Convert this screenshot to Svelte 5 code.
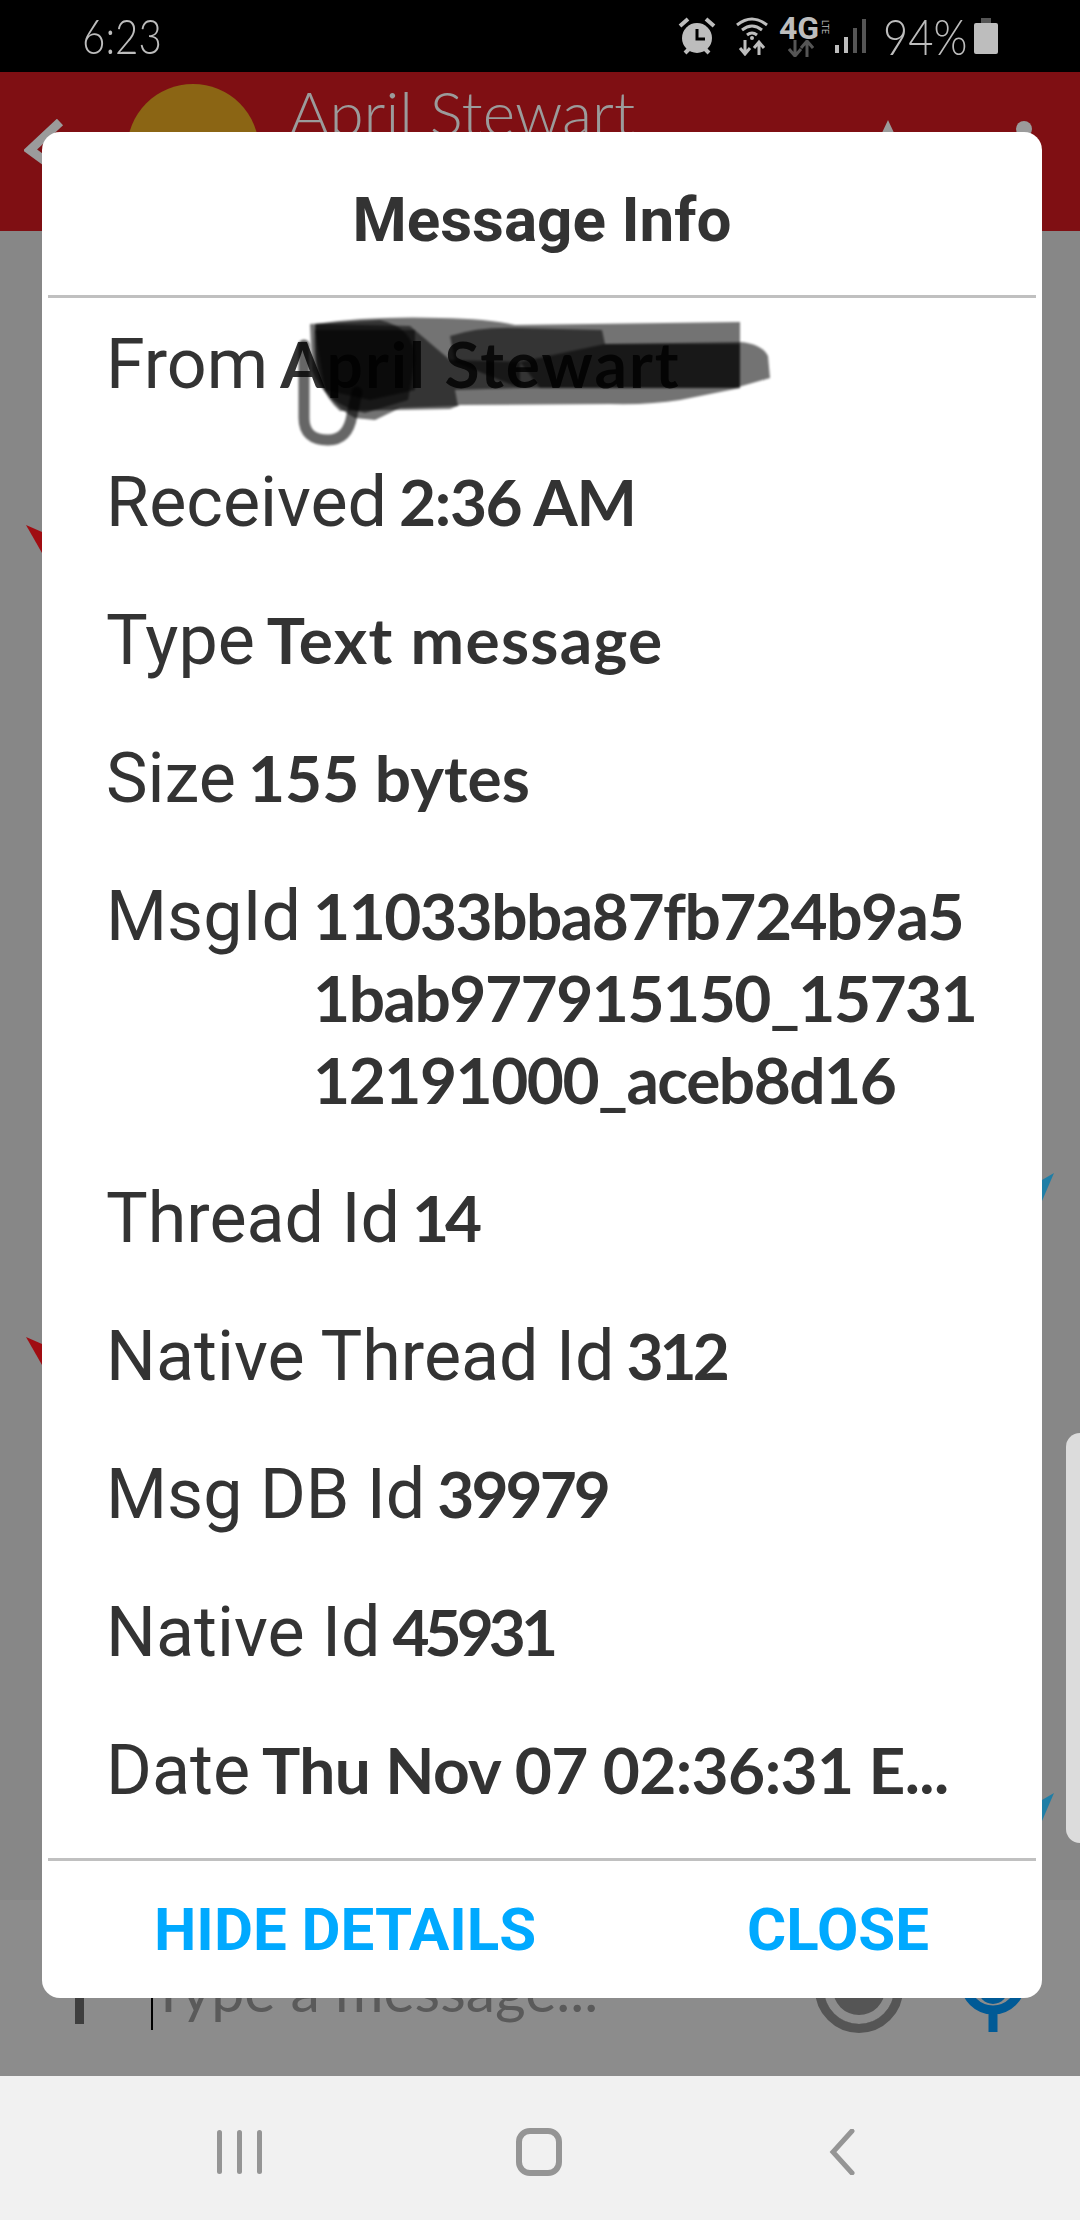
<script>
  // rows of the info dialog, long values are split the way the phone wrapped them
  // ls = letter spacing so the stand-in font runs as wide as the original handwriting
  const rows = [
    { label: 'From', lines: ['April Stewart'], ls: 2 },
    { label: 'Received', lines: ['2:36 AM'], ls: -1.4 },
    { label: 'Type', lines: ['Text message'], ls: 1.3 },
    { label: 'Size', lines: ['155 bytes'], ls: 0 },
    { label: 'MsgId', lines: ['11033bba87fb724b9a5', '1bab977915150_15731', '12191000_aceb8d16'], ls: -1.5 },
    { label: 'Thread Id', lines: ['14'], ls: -4 },
    { label: 'Native Thread Id', lines: ['312'], ls: -4 },
    { label: 'Msg DB Id', lines: ['39979'], ls: -3 },
    { label: 'Native Id', lines: ['45931'], ls: -5 },
    { label: 'Date', lines: ['Thu Nov 07 02:36:31 E...'], ls: -0.6 }
  ];
</script>

<div class="phone">
  <div class="status">
    <span class="time">6:23</span>
    <div class="status-icons">
      <svg class="alarm" width="38" height="38" viewBox="0 0 38 38">
        <circle cx="19" cy="21" r="15" fill="#bdbdbd" />
        <path d="M19 12v10h8" fill="none" stroke="#000" stroke-width="3" />
        <path d="M2 9l8-7M36 9l-8-7M7 36l4-4M31 36l-4-4" stroke="#bdbdbd" stroke-width="4" />
      </svg>
      <svg class="wifi" width="32" height="40" viewBox="0 0 32 40">
        <path d="M1 9Q16-3 31 9M6 14Q16 6 26 14M11 19Q16 15 21 19" fill="none" stroke="#bdbdbd" stroke-width="3" />
        <circle cx="16" cy="22" r="2" fill="#bdbdbd" />
        <path d="M9 24v13M4 32l5 6 5-6M23 39V26M18 32l5-6 5 6" fill="none" stroke="#bdbdbd" stroke-width="3" />
      </svg>
      <div class="net">
        <div class="net-top"><span class="g4">4G</span><span class="lte">LTE</span></div>
        <svg width="26" height="17" viewBox="0 0 26 17">
          <path d="M7 0v15M1 9l6 7 6-7M19 17V2M13 8l6-7 6 7" fill="none" stroke="#555" stroke-width="3" />
        </svg>
      </div>
      <svg class="signal" width="31" height="34" viewBox="0 0 31 34">
        <rect x="0" y="26" width="4" height="8" fill="#bdbdbd" />
        <rect x="9" y="18" width="4" height="16" fill="#bdbdbd" />
        <rect x="18" y="9" width="4" height="25" fill="#555" />
        <rect x="27" y="0" width="4" height="34" fill="#555" />
      </svg>
      <span class="pct">94%</span>
      <svg class="battery" width="24" height="36" viewBox="0 0 24 36">
        <rect x="7" y="0" width="10" height="5" fill="#555" />
        <rect x="0" y="5" width="24" height="31" rx="2" fill="#bdbdbd" />
      </svg>
    </div>
  </div>

  <header class="topbar">
    <svg class="back" width="40" height="54" viewBox="0 0 40 54">
      <path d="M36 3L6 31l30 22" fill="none" stroke="#9b9b9b" stroke-width="9" />
    </svg>
    <div class="avatar"></div>
    <span class="contact">April Stewart</span>
    <svg class="top-action" width="28" height="40" viewBox="0 0 28 40">
      <path d="M14 0L28 30H0z" fill="#9b9b9b" />
    </svg>
    <span class="kebab"></span>
  </header>

  <main class="messages">
    <i class="tail red one"></i>
    <i class="tail red two"></i>
    <i class="tail blue one"></i>
    <i class="tail blue two"></i>
    <div class="scrollbar"></div>
  </main>

  <footer class="composer">
    <span class="plus"></span>
    <span class="caret"></span>
    <span class="placeholder">Type a message...</span>
    <span class="target"></span>
    <svg class="mic" width="64" height="76" viewBox="0 0 64 76">
      <rect x="17" y="0" width="30" height="48" rx="15" fill="#005a96" />
      <path d="M4 26a28 28 0 0 0 56 0M32 54v22" fill="none" stroke="#005a96" stroke-width="9" />
    </svg>
  </footer>

  <nav class="navbar">
    <div class="recents"><i></i><i></i><i></i></div>
    <div class="home"></div>
    <svg width="26" height="46" viewBox="0 0 26 46">
      <path d="M23 2L4 23l19 21" fill="none" stroke="#959595" stroke-width="5" stroke-linecap="round" />
    </svg>
  </nav>

  <div class="dialog">
    <h2>Message Info</h2>
    <div class="rows">
      {#each rows as row}
        <div class="row">
          <span class="label">{row.label}</span>
          <div class="value" style="letter-spacing: {row.ls}px">
            {#each row.lines as line}
              <div>{line}</div>
            {/each}
          </div>
        </div>
      {/each}
    </div>
    <div class="actions">
      <span>HIDE DETAILS</span>
      <span>CLOSE</span>
    </div>

    <!-- marker scribble over the sender's name -->
    <svg class="scribble" width="500" height="160" viewBox="0 0 500 160">
      <g fill="#000" fill-opacity="0.55">
        <path d="M35 24Q90 16 160 18Q210 19 235 25L460 22V88L400 100Q370 105 330 104L180 105L170 109L60 111Q30 85 35 24Z" />
        <path d="M30 24L100 20Q135 28 135 60L128 100L85 113Q45 105 32 70Z" />
        <path d="M170 36Q200 26 240 28L322 30L325 44L460 42Q482 44 488 56L490 78L455 88L240 88L175 62Z" />
        <path d="M36 24L130 26L170 60L240 62L240 88L175 90L178 106L120 108L95 120L75 118Q40 100 36 60Z" />
        <path d="M325 44H460V88H260L240 62Z" />
        <path d="M35 30L135 30L135 90L90 100L45 90Z" />
      </g>
      <path d="M24 45V118Q24 140 48 140Q68 140 72 115L77 92" fill="none" stroke="#000" stroke-opacity="0.6" stroke-width="11" stroke-linecap="round" />
    </svg>
  </div>
</div>

<style>
  :global(body) {
    margin: 0;
    background: #8a8a8a;
  }

  .phone {
    position: relative;
    width: 1080px;
    height: 2220px;
    display: flex;
    flex-direction: column;
    overflow: hidden;
    font-family: Roboto, "Liberation Sans", sans-serif;
  }

  .status {
    height: 72px;
    background: #000;
    display: flex;
    align-items: center;
    justify-content: space-between;
    padding: 0 82px 0 82px;
    color: #bdbdbd;
    flex: none;
  }
  .time,
  .pct {
    font-family: Lato, sans-serif;
    font-weight: 300;
    line-height: 1;
    display: inline-block;
  }
  .time {
    font-size: 48px;
    transform: scaleX(0.84);
    transform-origin: left center;
  }
  .status-icons {
    display: flex;
    align-items: center;
  }
  .wifi { margin-left: 20px; }
  .net {
    margin-left: 10px;
    width: 46px;
    display: flex;
    flex-direction: column;
    align-items: center;
  }
  .net-top {
    display: flex;
    align-items: center;
    height: 24px;
    width: 46px;
    color: #bdbdbd;
  }
  .g4 {
    font-weight: 700;
    font-size: 32px;
    line-height: 24px;
    margin-left: 1px;
  }
  .lte {
    font-size: 9px;
    writing-mode: vertical-rl;
    line-height: 9px;
    margin-left: 1px;
  }
  .signal { margin-left: 11px; }
  .pct {
    margin-left: 17px;
    width: 79px;
    font-size: 50px;
    white-space: nowrap;
    transform: scaleX(0.87);
    transform-origin: left center;
  }
  .battery { margin-left: 12px; }

  .topbar {
    position: relative;
    height: 159px;
    background: #7f0f13;
    flex: none;
  }
  .back {
    position: absolute;
    left: 24px;
    top: 47px;
  }
  .avatar {
    position: absolute;
    left: 127px;
    top: 12px;
    width: 132px;
    height: 132px;
    border-radius: 50%;
    background: #8b6514;
  }
  .contact {
    position: absolute;
    left: 289px;
    top: 3px;
    font-family: Lato, sans-serif;
    font-weight: 300;
    font-size: 62px;
    color: #9b9b9b;
  }
  .top-action {
    position: absolute;
    left: 874px;
    top: 48px;
  }
  .kebab {
    position: absolute;
    left: 1016px;
    top: 49px;
    width: 16px;
    height: 16px;
    border-radius: 50%;
    background: #9b9b9b;
  }

  .messages {
    position: relative;
    flex: 1;
    background: #878787;
  }
  .tail {
    position: absolute;
    height: 28px;
  }
  .tail.red {
    left: 26px;
    width: 16px;
    background: #a00d12;
    clip-path: polygon(0 0, 100% 25%, 100% 100%);
  }
  .tail.red.one { top: 294px; }
  .tail.red.two { top: 1106px; }
  .tail.blue {
    left: 1042px;
    width: 12px;
    background: #1f7ea6;
    clip-path: polygon(100% 0, 0 25%, 0 100%);
  }
  .tail.blue.one { top: 942px; }
  .tail.blue.two { top: 1562px; }
  .scrollbar {
    position: absolute;
    right: 0;
    top: 1202px;
    width: 14px;
    height: 410px;
    background: #dcdcdc;
    border-radius: 14px 0 0 14px;
  }

  .composer {
    position: relative;
    height: 176px;
    background: #8c8c8c;
    flex: none;
  }
  .plus {
    position: absolute;
    left: 75px;
    top: 70px;
    width: 9px;
    height: 54px;
    background: #3e3e3e;
  }
  .caret {
    position: absolute;
    left: 151px;
    top: 84px;
    width: 2px;
    height: 46px;
    background: #000;
  }
  .placeholder {
    position: absolute;
    left: 151px;
    top: 60px;
    font-family: Lato, sans-serif;
    font-size: 59px;
    line-height: 60px;
    color: #5a5a5a;
    white-space: nowrap;
  }
  .target {
    position: absolute;
    left: 815px;
    top: 45px;
    width: 88px;
    height: 88px;
    box-sizing: border-box;
    border: 9px solid #555;
    border-radius: 50%;
    box-shadow: inset 0 0 0 9px #8c8c8c, inset 0 0 0 40px #555;
  }
  .mic {
    position: absolute;
    left: 961px;
    top: 56px;
  }

  .navbar {
    height: 144px;
    box-sizing: border-box;
    background: #f1f1f1;
    flex: none;
    position: relative;
    display: flex;
    align-items: center;
    padding: 8px 0 0 217px;
  }
  .recents {
    display: flex;
    gap: 15px;
  }
  .recents i {
    width: 5px;
    height: 44px;
    background: #959595;
    border-radius: 3px;
  }
  .home {
    margin-left: 254px;
    width: 46px;
    height: 48px;
    box-sizing: border-box;
    border: 6px solid #959595;
    border-radius: 14px;
    margin-right: 267px;
  }

  .dialog {
    position: absolute;
    left: 42px;
    top: 132px;
    width: 1000px;
    height: 1866px;
    background: #fff;
    border-radius: 18px;
    display: flex;
    flex-direction: column;
    color: #333;
  }
  h2 {
    margin: 0 6px;
    height: 166px;
    box-sizing: border-box;
    padding-top: 12px;
    border-bottom: 3px solid #c0c0c0;
    display: flex;
    align-items: center;
    justify-content: center;
    font-size: 62px;
    font-weight: 700;
    flex: none;
  }
  .rows {
    flex: 1;
    display: flex;
    flex-direction: column;
    gap: 56px;
    padding: 25px 0 0 64px;
  }
  .row {
    display: flex;
    gap: 12px;
    font-size: 70px;
    line-height: 82px;
  }
  .label {
    white-space: nowrap;
    flex: none;
  }
  .value {
    font-family: Lato, sans-serif;
    font-weight: 700;
    font-size: 64px;
    white-space: nowrap;
  }
  .actions {
    margin: 0 6px;
    height: 140px;
    box-sizing: border-box;
    border-top: 3px solid #c0c0c0;
    flex: none;
    display: flex;
    align-items: center;
    justify-content: space-between;
    padding: 0 107px 0 106px;
    color: #00a9ff;
    font-size: 60px;
    line-height: 60px;
    font-weight: 700;
  }
  .scribble {
    position: absolute;
    left: 238px;
    top: 168px;
    filter: blur(1px);
  }
</style>
